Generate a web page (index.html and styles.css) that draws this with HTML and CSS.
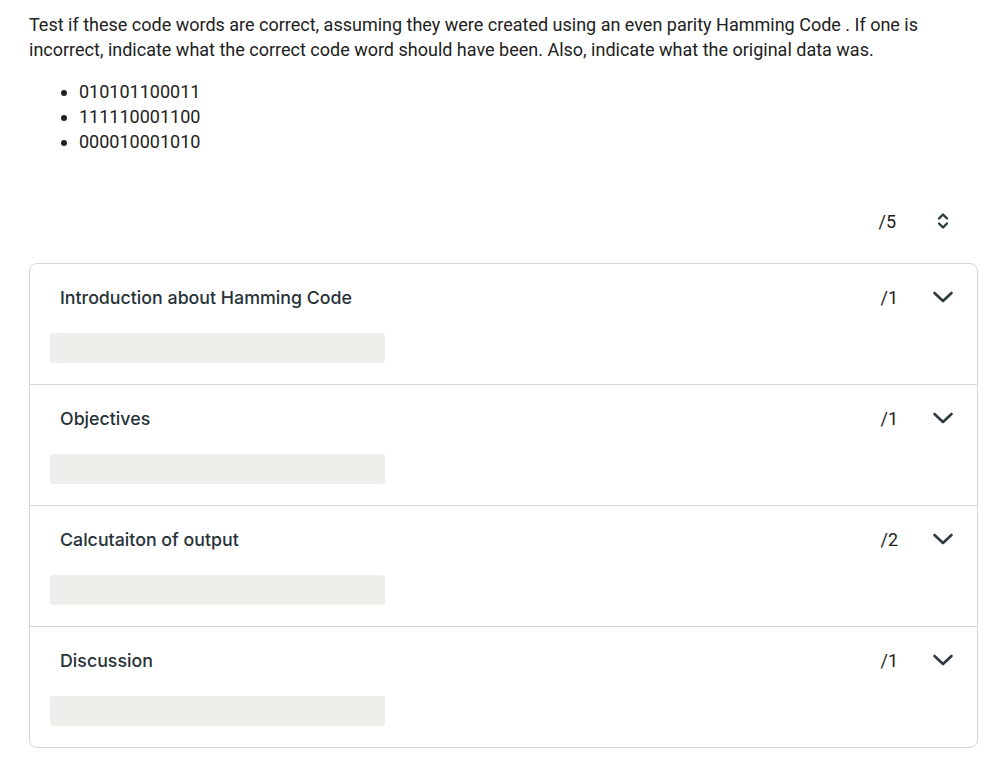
FILE: index.html
```html
<!DOCTYPE html>
<html>
<head>
<meta charset="utf-8">
<link rel="stylesheet" href="styles.css">
</head>
<body>
<div class="page">
  <p class="question">Test if these code words are correct, assuming they were created using an even parity Hamming Code . If one is incorrect, indicate what the correct code word should have been. Also, indicate what the original data was.</p>
  <ul class="codes">
    <li>010101100011</li>
    <li>111110001100</li>
    <li>000010001010</li>
  </ul>
  <div class="total">
    <span class="score">/5</span>
    <span class="icon">
      <svg width="12" height="18" viewBox="0 0 12 18"><path d="M2 6.5 L6 2.5 L10 6.5 M2 11.5 L6 15.5 L10 11.5" fill="none" stroke="#2d3b3f" stroke-width="2.4" stroke-linecap="round" stroke-linejoin="round"/></svg>
    </span>
  </div>
  <div class="card">
    <div class="section">
      <div class="head"><span class="title">Introduction about Hamming Code</span><span class="score">/1</span><span class="icon"><svg width="22" height="14" viewBox="0 0 22 14"><path d="M2.5 3 L11 11 L19.5 3" fill="none" stroke="#2d3b3f" stroke-width="2.6" stroke-linecap="round" stroke-linejoin="round"/></svg></span></div>
      <div class="bar"></div>
    </div>
    <div class="section">
      <div class="head"><span class="title">Objectives</span><span class="score">/1</span><span class="icon"><svg width="22" height="14" viewBox="0 0 22 14"><path d="M2.5 3 L11 11 L19.5 3" fill="none" stroke="#2d3b3f" stroke-width="2.6" stroke-linecap="round" stroke-linejoin="round"/></svg></span></div>
      <div class="bar"></div>
    </div>
    <div class="section">
      <div class="head"><span class="title">Calcutaiton of output</span><span class="score">/2</span><span class="icon"><svg width="22" height="14" viewBox="0 0 22 14"><path d="M2.5 3 L11 11 L19.5 3" fill="none" stroke="#2d3b3f" stroke-width="2.6" stroke-linecap="round" stroke-linejoin="round"/></svg></span></div>
      <div class="bar"></div>
    </div>
    <div class="section">
      <div class="head"><span class="title">Discussion</span><span class="score">/1</span><span class="icon"><svg width="22" height="14" viewBox="0 0 22 14"><path d="M2.5 3 L11 11 L19.5 3" fill="none" stroke="#2d3b3f" stroke-width="2.6" stroke-linecap="round" stroke-linejoin="round"/></svg></span></div>
      <div class="bar"></div>
    </div>
  </div>
</div>
</body>
</html>
```
FILE: styles.css
```css
* { box-sizing: border-box; }
html, body { margin: 0; padding: 0; background: #fff; }
body { font-family: Roboto, "Liberation Sans", sans-serif; color: #212121; }
.page { padding: 12px 28px 0 29px; }
.question { margin: 0; font-size: 18px; line-height: 25px; }
.codes { margin: 17px 0 0 0; padding-left: 50px; font-size: 18px; line-height: 25px; }
.codes li { padding-left: 0; }
.total { display: flex; align-items: center; justify-content: flex-end; height: 30px; margin-top: 52px; padding-right: 24px; }
.score { font-family: Roboto, "Liberation Sans", sans-serif; font-size: 18px; color: #212121; }
.icon { display: flex; align-items: center; justify-content: center; width: 22px; margin-left: 34px; }
.total .icon { margin-left: 36px; }
.card { margin-top: 27px; border: 1px solid #d6d6d6; border-radius: 8px; }
.section { height: 121px; border-top: 1px solid #d6d6d6; padding: 20px 0 0 20px; }
.section:first-child { height: 120px; border-top: none; }
.head { display: flex; align-items: center; height: 26px; padding-left: 10px; padding-right: 23px; }
.title { flex: 1; font-family: Inter, "Noto Sans", sans-serif; font-weight: 500; font-size: 17.8px; color: #263238; }
.bar { margin-top: 23px; width: 335px; height: 30px; background: #efeeeb; border-radius: 3px; }
```
